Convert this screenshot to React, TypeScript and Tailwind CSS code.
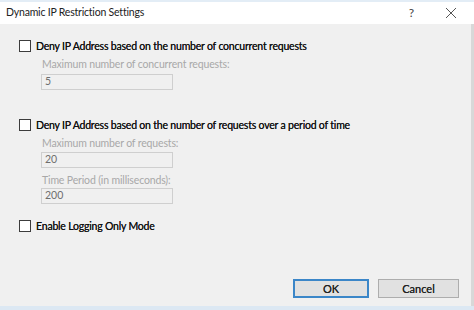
import React from "react";

function Check({ label }: { label: string }) {
  return (
    <div className="flex items-center h-[14px]">
      <div className="w-[12px] h-[12px] border border-[#3c3c3c] bg-white ml-[19px] shrink-0" />
      <span className="ml-[5px] text-[10.5px] tracking-[-0.2px] text-[#111] leading-none whitespace-nowrap [text-shadow:0_0_0.4px_#333]">{label}</span>
    </div>
  );
}

function Field({ label, value, gap }: { label: string; value: string; gap: string }) {
  return (
    <div className="flex flex-col ml-[41px]">
      <span className="h-[14px] ml-[1px] text-[10.5px] tracking-[-0.15px] leading-[14px] text-[#a8a8a8] whitespace-nowrap">{label}</span>
      <div className={`${gap} w-[132px] h-[16px] border border-[#cfcfcf] bg-[#f0f0f0] flex items-center pl-[3px] text-[10.5px] text-[#6e6e6e]`}>
        {value}
      </div>
    </div>
  );
}

export default function App() {
  return (
    <div
      className="w-[474px] h-[310px] bg-[#f0f0f0] flex flex-col relative overflow-hidden"
      style={{ fontFamily: 'Lato, "Open Sans", sans-serif' }}
    >
      <div className="h-[2px] bg-[#e3edf6]" />
      <div className="h-[22px] bg-white flex items-center shrink-0">
        <span className="ml-[6px] text-[10.5px] tracking-[-0.2px] text-[#222] whitespace-nowrap">Dynamic IP Restriction Settings</span>
        <span className="ml-auto text-[12px] text-[#444] mr-[31px]">?</span>
        <svg width="12" height="12" viewBox="0 0 12 12" className="mr-[17px]">
          <path d="M1 1 L11 11 M11 1 L1 11" stroke="#555" strokeWidth="1" />
        </svg>
      </div>
      <div className="flex-1 flex flex-col border-r-[3px] border-[#d8d8d8]">
        <div className="mt-[15px]">
          <Check label="Deny IP Address based on the number of concurrent requests" />
        </div>
        <div className="mt-[4px]">
          <Field label="Maximum number of concurrent requests:" value="5" gap="mt-[3px]" />
        </div>
        <div className="mt-[28px]">
          <Check label="Deny IP Address based on the number of requests over a period of time" />
        </div>
        <div className="mt-[4px]">
          <Field label="Maximum number of requests:" value="20" gap="mt-[2px]" />
        </div>
        <div className="mt-[5px]">
          <Field label="Time Period (in milliseconds):" value="200" gap="mt-[1px]" />
        </div>
        <div className="mt-[15px]">
          <Check label="Enable Logging Only Mode" />
        </div>
        <div className="flex-1" />
        <div className="flex justify-end gap-[9px] mr-[12px] mb-[8px]">
          <button className="w-[76px] h-[19px] border-2 border-[#3b86c8] bg-[#e1e1e1] text-[11px] text-[#222] leading-none [text-shadow:0_0_0.4px_#333]">
            OK
          </button>
          <button className="w-[81px] h-[19px] border border-[#adadad] bg-[#e1e1e1] text-[11px] text-[#222] leading-none [text-shadow:0_0_0.4px_#333]">
            Cancel
          </button>
        </div>
      </div>
      <div className="h-[4px] bg-[#dce8f3]" />
    </div>
  );
}
